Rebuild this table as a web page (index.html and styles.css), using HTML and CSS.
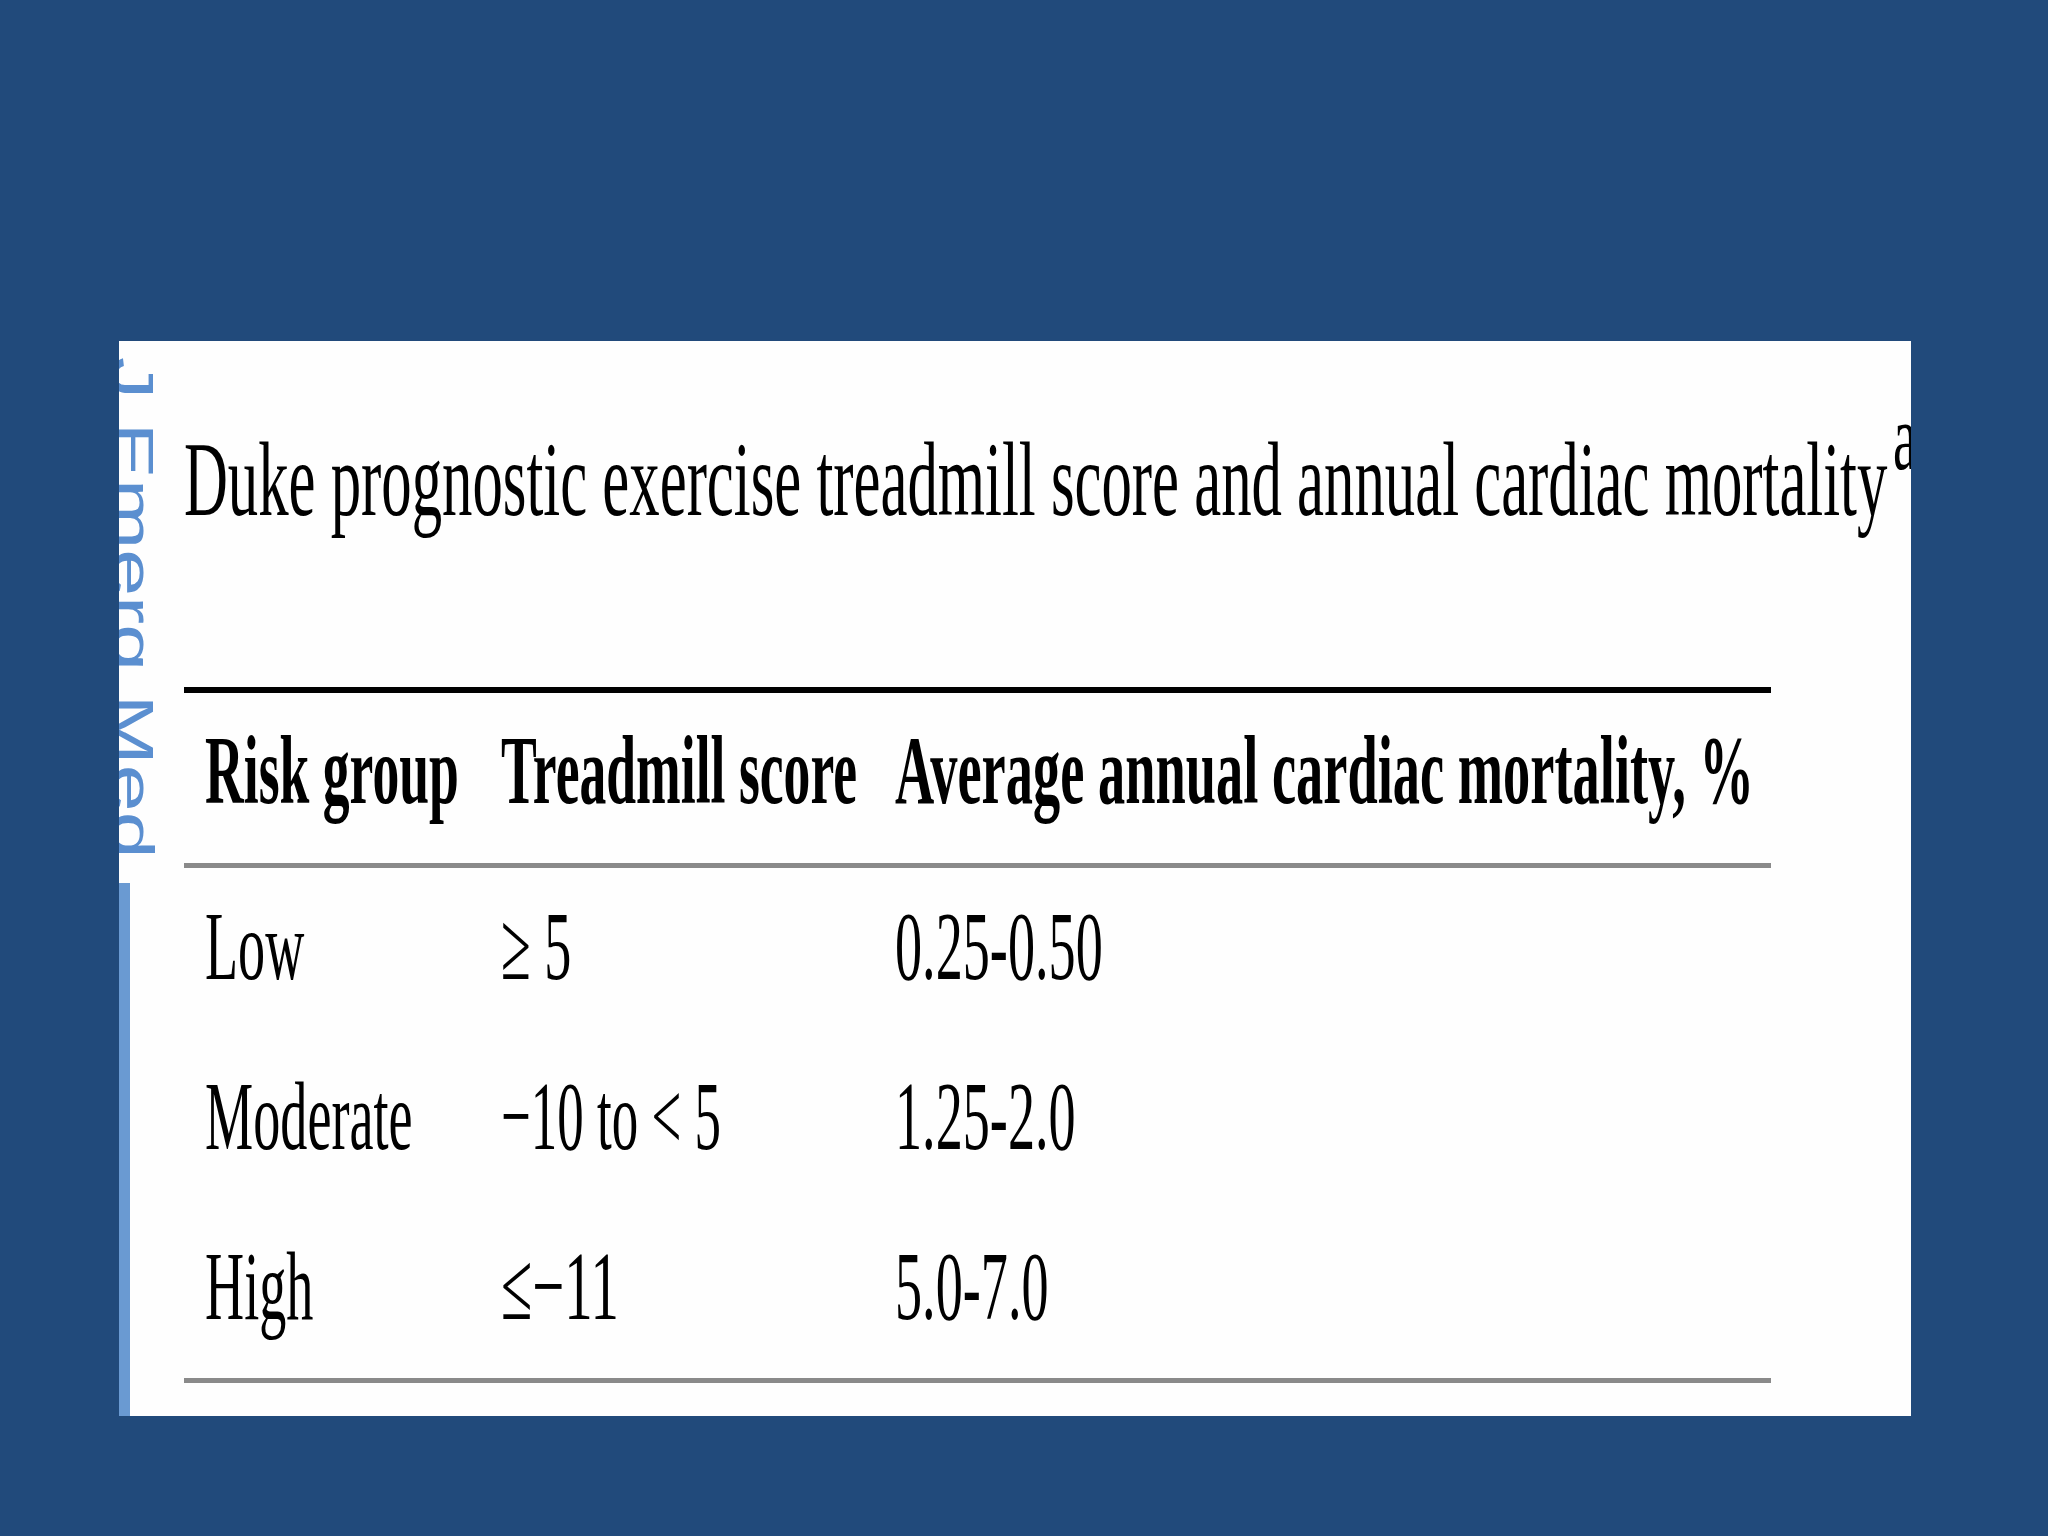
FILE: index.html
```html
<!DOCTYPE html>
<html lang="en">
<head>
<meta charset="utf-8">
<title>Duke prognostic exercise treadmill score</title>
<link rel="stylesheet" href="styles.css">
</head>
<body>
<div class="slide">
  <div class="panel">
    <div class="side-label">J Emerg Med</div>
    <div class="side-bar"></div>
    <h1 class="title"><span class="sq-title">Duke prognostic exercise treadmill score and annual cardiac mortality<sup class="sup">a</sup></span></h1>
    <div class="tbl">
      <div class="row head">
        <div class="cell"><span class="sq">Risk group</span></div>
        <div class="cell"><span class="sq">Treadmill score</span></div>
        <div class="cell"><span class="sq sq-wide">Average annual cardiac mortality, %</span></div>
      </div>
      <div class="row data">
        <div class="cell"><span class="sq">Low</span></div>
        <div class="cell"><span class="sq">≥ 5</span></div>
        <div class="cell"><span class="sq">0.25-0.50</span></div>
      </div>
      <div class="row data">
        <div class="cell"><span class="sq">Moderate</span></div>
        <div class="cell"><span class="sq sq-narrow">−10 to &lt; 5</span></div>
        <div class="cell"><span class="sq">1.25-2.0</span></div>
      </div>
      <div class="row data">
        <div class="cell"><span class="sq">High</span></div>
        <div class="cell"><span class="sq sq-mid">≤−11</span></div>
        <div class="cell"><span class="sq">5.0-7.0</span></div>
      </div>
    </div>
  </div>
</div>
</body>
</html>
```
FILE: styles.css
```css
html, body {
  margin: 0;
  padding: 0;
}
body {
  background: #214a7b;
  font-family: "Liberation Serif", "Times New Roman", serif;
}
.slide {
  width: 2048px;
  height: 1536px;
  box-sizing: border-box;
  padding-top: 341px;
  padding-left: 119px;
  background: #214a7b;
}
.panel {
  position: relative;
  width: 1792px;
  box-sizing: border-box;
  padding: 86px 0 33px 65px;
  background: #fefefe;
  overflow: hidden;
  color: #000;
}
.side-label {
  position: absolute;
  left: 42px;
  top: 16px;
  font-family: "Liberation Sans", Arial, sans-serif;
  font-size: 57px;
  line-height: 57px;
  color: #5b8fd0;
  white-space: nowrap;
  transform-origin: 0 0;
  transform: rotate(90deg) scaleX(1.48);
}
.side-bar {
  position: absolute;
  left: 0;
  top: 542px;
  bottom: 0;
  width: 11px;
  background: #6a9ad2;
}
.title {
  margin: 0;
  font-weight: normal;
  font-size: 106px;
  line-height: 106px;
  height: 106px;
  white-space: nowrap;
}
.sq-title {
  display: inline-block;
  transform-origin: 0 50%;
  transform: scaleX(0.573);
}
.sup {
  font-size: 95px;
  line-height: 0;
  vertical-align: 46px;
  margin-left: 10px;
}
.tbl {
  margin-top: 154px;
  width: 1587px;
  border-top: 6px solid #000;
  border-bottom: 5px solid #8a8a8a;
}
.row {
  display: grid;
  grid-template-columns: 296px 394px 1fr;
  padding-left: 21px;
  white-space: nowrap;
}
.head {
  font-weight: bold;
  font-size: 97px;
  line-height: 97px;
  padding-top: 29px;
  padding-bottom: 44px;
  border-bottom: 5px solid #8a8a8a;
}
.data {
  font-size: 98px;
  line-height: 98px;
  padding-top: 29px;
  padding-bottom: 43px;
}
.sq {
  display: inline-block;
  transform-origin: 0 50%;
  transform: scaleX(0.553);
}
.sq-wide {
  transform: scaleX(0.561);
}
.sq-narrow {
  transform: scaleX(0.54);
}
.sq-mid {
  transform: scaleX(0.58);
}
```
